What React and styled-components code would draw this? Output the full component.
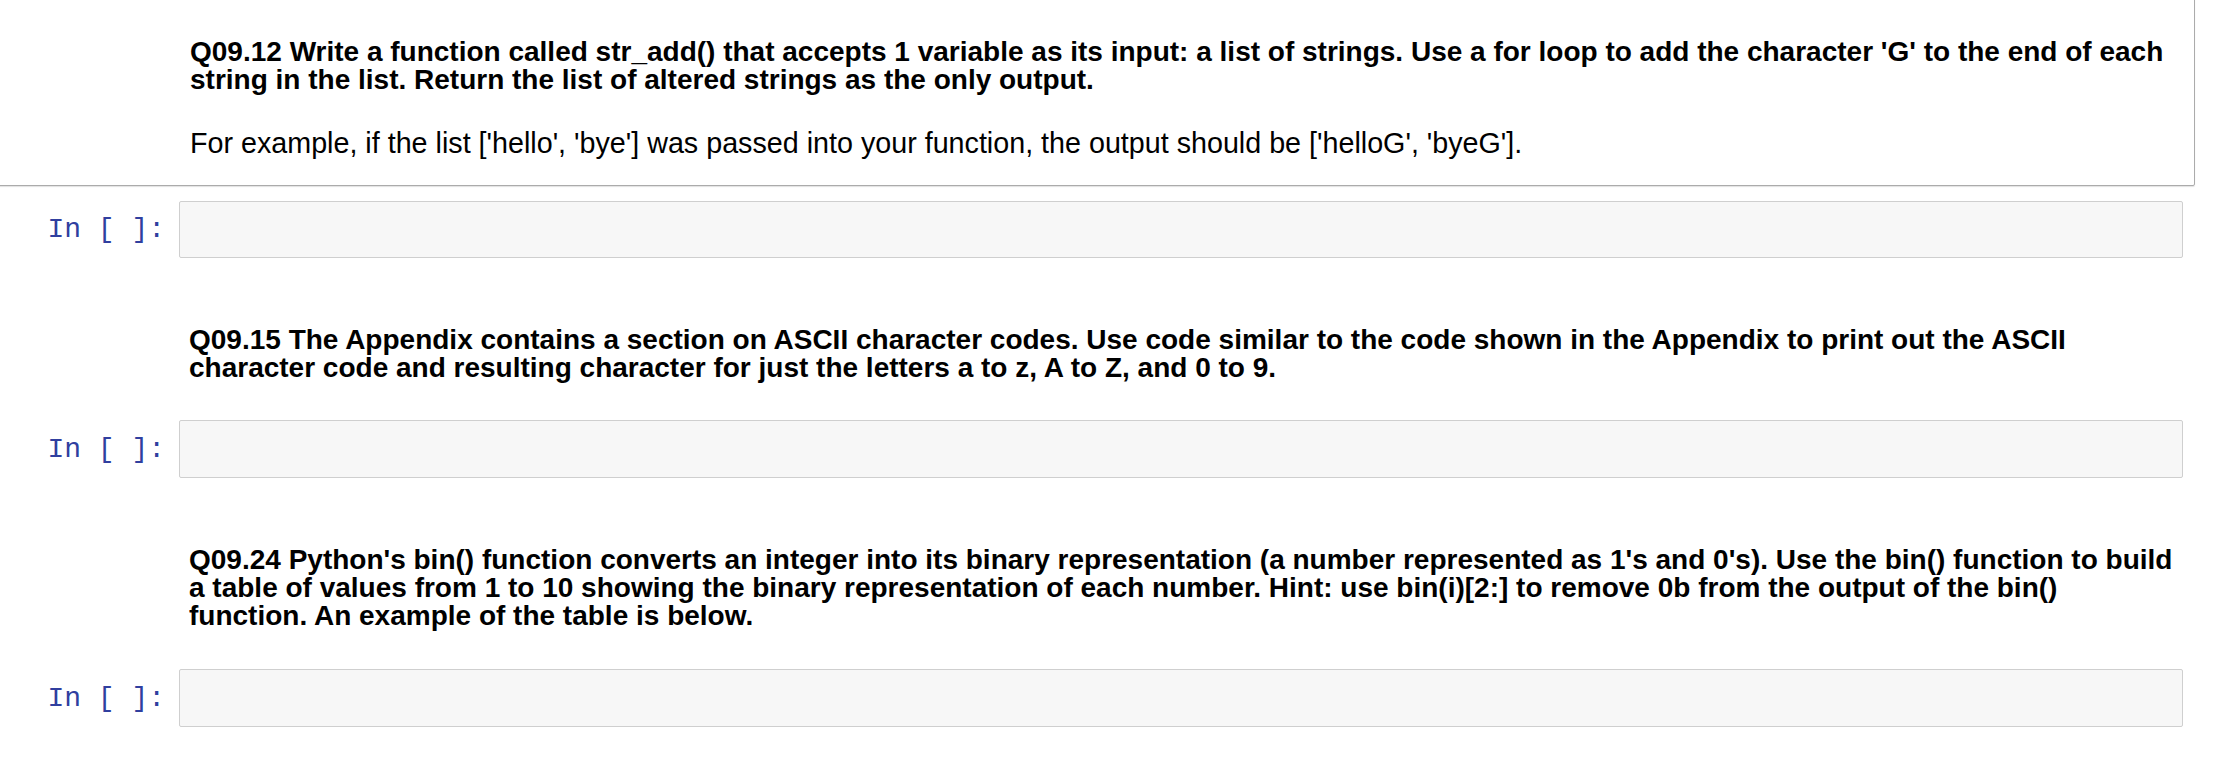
import styled, { createGlobalStyle } from 'styled-components';

const GlobalStyle = createGlobalStyle`
    html, body {
        margin: 0;
        padding: 0;
        background: #ffffff;
    }
    body {
        font-family: 'Liberation Sans', Arial, sans-serif;
        color: #000000;
        overflow: hidden;
    }
`

const Notebook = styled.div`
    width: 2214px;
    height: 776px;
    overflow: hidden;
`

// the selected markdown cell, its top and left edges scrolled out of view
const MarkdownCell = styled.div`
    margin: -3px 0 0 -3px;
    width: 2198px;
    box-sizing: border-box;
    border: 1px solid #ababab;
    border-radius: 2px;
    box-shadow: 0 1px 1px rgba(0, 0, 0, 0.12);
    padding: 40px 0 25px 192px;
`

const PlainCell = styled.div`
    padding: ${props => props.$top}px 0 0 189px;
`

const Question = styled.h4`
    margin: 0;
    font-size: 28px;
    line-height: 28px;
    font-weight: 700;
    white-space: nowrap;
`

const Paragraph = styled.p`
    margin: 32px 0 0;
    font-size: 28.7px;
    line-height: 34px;
    white-space: nowrap;
`

const CodeCell = styled.div`
    display: flex;
    align-items: center;
    margin-top: ${props => props.$top}px;
    padding-right: 31px;
`

const Prompt = styled.div`
    flex: 0 0 179px;
    box-sizing: border-box;
    padding-right: 14px;
    text-align: right;
    font-family: 'Liberation Mono', 'Courier New', monospace;
    font-size: 28px;
    color: #303f9f;
    white-space: pre;
`

const InputArea = styled.div`
    flex: 1;
    height: ${props => props.$height}px;
    box-sizing: border-box;
    background: #f7f7f7;
    border: 1px solid #cfcfcf;
    border-radius: 2px;
`

function Code({ top, height = 57 }) {
    return (
        <CodeCell $top={top}>
            <Prompt>In [ ]:</Prompt>
            <InputArea $height={height} />
        </CodeCell>
    )
}

export default function App() {
    return (
        <Notebook>
            <GlobalStyle />
            <MarkdownCell>
                <Question>
                    Q09.12 Write a function called str_add() that accepts 1 variable as its input: a list of strings. Use a for loop to add the character 'G' to the end of each<br />
                    string in the list. Return the list of altered strings as the only output.
                </Question>
                <Paragraph>
                    For example, if the list ['hello', 'bye'] was passed into your function, the output should be ['helloG', 'byeG'].
                </Paragraph>
            </MarkdownCell>
            <Code top={15} />
            <PlainCell $top={68}>
                <Question>
                    Q09.15 The Appendix contains a section on ASCII character codes. Use code similar to the code shown in the Appendix to print out the ASCII<br />
                    character code and resulting character for just the letters a to z, A to Z, and 0 to 9.
                </Question>
            </PlainCell>
            <Code top={38} height={58} />
            <PlainCell $top={68}>
                <Question>
                    Q09.24 Python's bin() function converts an integer into its binary representation (a number represented as 1's and 0's). Use the bin() function to build<br />
                    a table of values from 1 to 10 showing the binary representation of each number. Hint: use bin(i)[2:] to remove 0b from the output of the bin()<br />
                    function. An example of the table is below.
                </Question>
            </PlainCell>
            <Code top={39} height={58} />
        </Notebook>
    )
}
